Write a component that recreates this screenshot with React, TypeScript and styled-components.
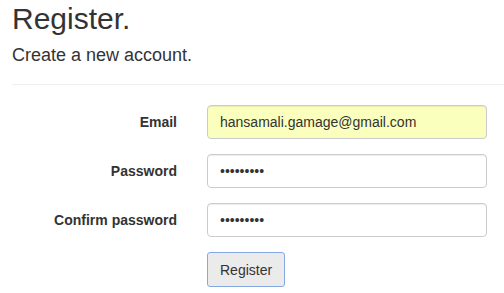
import { Fragment } from "react";
import styled, { createGlobalStyle } from "styled-components";

const GlobalStyle = createGlobalStyle`
  html, body {
    margin: 0;
    padding: 0;
    background: #fff;
  }
  body {
    font-family: "Liberation Sans", Arial, sans-serif;
    font-size: 14px;
    line-height: 20px;
    color: #333;
  }
  * {
    box-sizing: border-box;
  }
`;

const Container = styled.div`
  padding-left: 12px;
`;

const Title = styled.h2`
  margin: 0;
  padding-top: 2px;
  font-size: 30px;
  line-height: 33px;
  font-weight: 400;
`;

const Subtitle = styled.h4`
  margin: 10px 0 0;
  font-size: 18px;
  line-height: 20px;
  font-weight: 400;
`;

const Rule = styled.hr`
  margin: 19px 0 20px;
  border: 0;
  border-top: 1px solid #eee;
  height: 0;
`;

const Form = styled.form`
  display: flex;
  flex-direction: column;
  gap: 15px;
  margin-left: -12px;
`;

const Group = styled.div`
  display: grid;
  grid-template-columns: 192px 1fr;
  align-items: start;
`;

const Label = styled.label`
  padding: 7px 15px 0 0;
  text-align: right;
  font-weight: 700;
  font-size: 14px;
  line-height: 20px;
  color: #333;
`;

const Field = styled.div`
  padding-left: 15px;
`;

const Input = styled.input<{ $autofill?: boolean }>`
  display: block;
  width: 280px;
  height: 34px;
  padding: 6px 12px;
  font-family: "Liberation Sans", Arial, sans-serif;
  font-size: 14px;
  line-height: 20px;
  color: #333;
  background: ${(p) => (p.$autofill ? "#faffbd" : "#fff")};
  border: 1px solid #ccc;
  border-radius: 4px;
  box-shadow: inset 0 1px 1px rgba(0, 0, 0, 0.075);
  outline: none;
`;

const Button = styled.button`
  display: inline-block;
  height: 35px;
  padding: 6px 12px;
  font-family: "Liberation Sans", Arial, sans-serif;
  font-size: 14px;
  line-height: 20px;
  color: #333;
  background: #ebebeb;
  border: 1px solid #86a9e3;
  border-radius: 3px;
  cursor: pointer;
`;

export default function App() {
  return (
    <Fragment>
      <GlobalStyle />
      <Container>
        <Title>Register.</Title>
        <Subtitle>Create a new account.</Subtitle>
        <Rule />
        <Form onSubmit={(e) => e.preventDefault()}>
          <Group>
            <Label htmlFor="email">Email</Label>
            <Field>
              <Input
                id="email"
                type="text"
                $autofill
                defaultValue="hansamali.gamage@gmail.com"
              />
            </Field>
          </Group>
          <Group>
            <Label htmlFor="password">Password</Label>
            <Field>
              <Input id="password" type="password" defaultValue="123456789" />
            </Field>
          </Group>
          <Group>
            <Label htmlFor="confirm">Confirm password</Label>
            <Field>
              <Input id="confirm" type="password" defaultValue="123456789" />
            </Field>
          </Group>
          <Group>
            <span />
            <Field>
              <Button type="submit">Register</Button>
            </Field>
          </Group>
        </Form>
      </Container>
    </Fragment>
  );
}
